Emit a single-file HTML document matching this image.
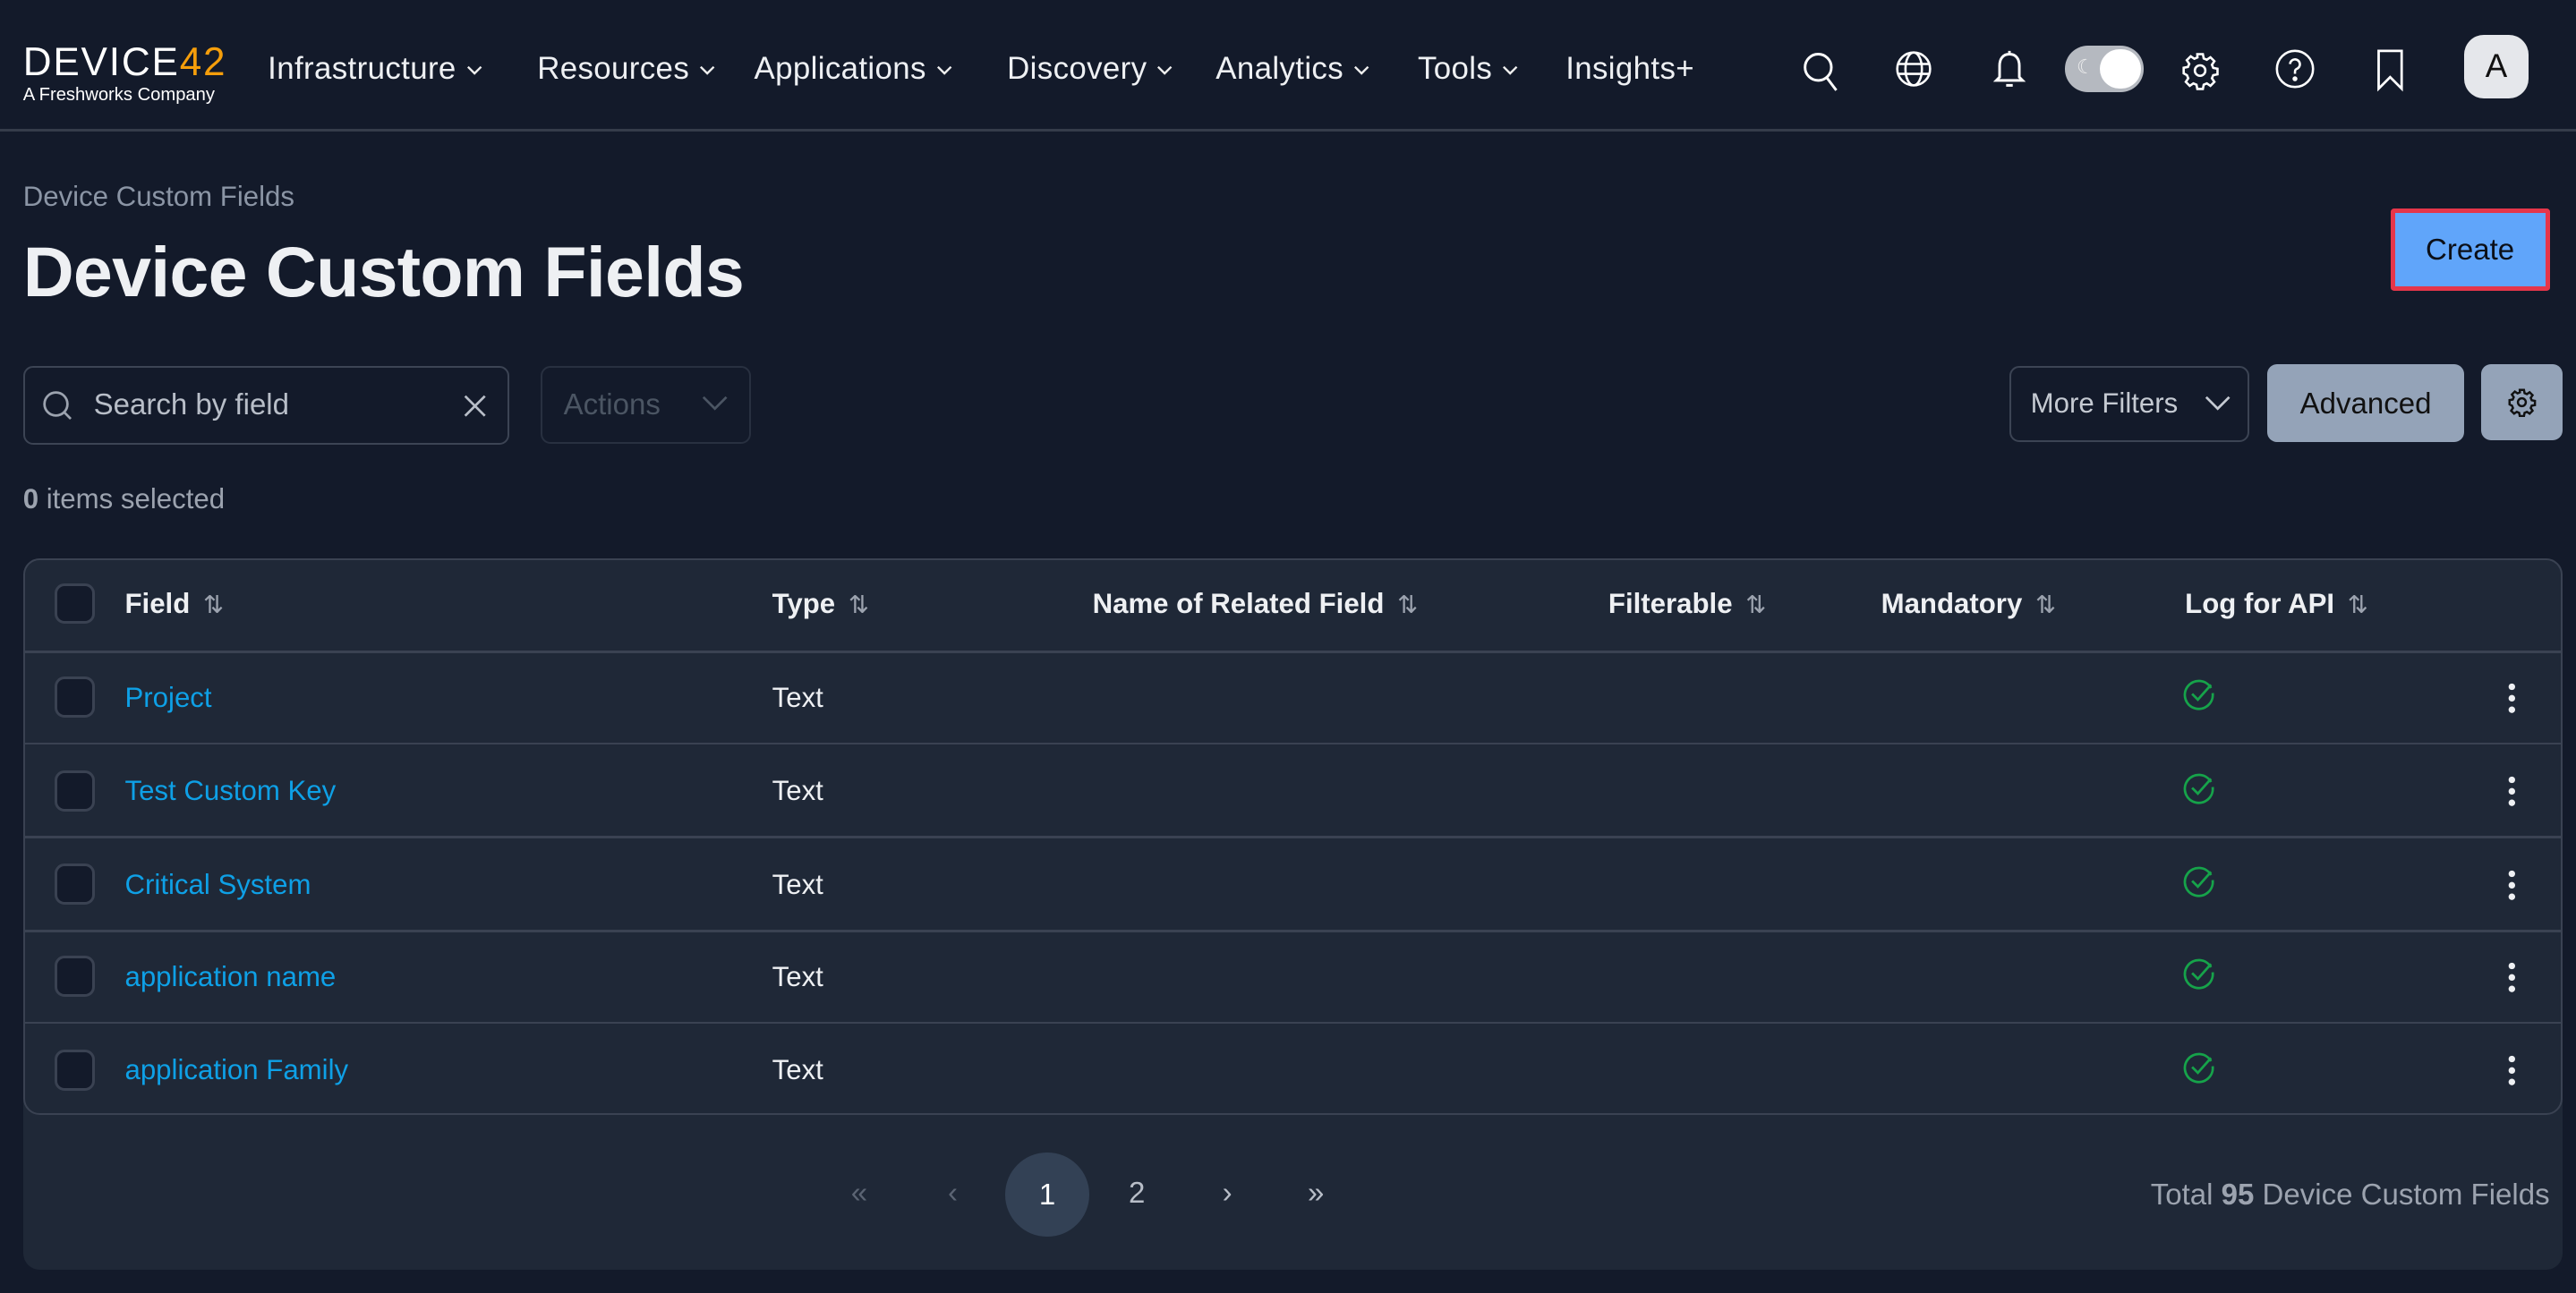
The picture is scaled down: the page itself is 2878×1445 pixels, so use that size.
<!DOCTYPE html>
<html><head><meta charset="utf-8"><style>
*{box-sizing:border-box;margin:0;padding:0}
html,body{background:#131a2a;overflow:hidden}
body{width:1568px;height:787px;zoom:1.83546;font-family:"Liberation Sans",sans-serif;color:#e5e7eb;position:relative}
.a{position:absolute}
.nav{top:31px;font-size:19px;color:#eef0f3;white-space:nowrap;letter-spacing:0.2px}
.nav svg{margin-left:6px;vertical-align:middle}
.hdr{top:0;left:0;width:1568px;height:80px;border-bottom:2px solid #353c4a}
.ic{top:30px}
.btn{border-radius:6px;font-size:17px;display:flex;align-items:center;justify-content:center}
.panel{left:14px;top:340px;width:1546px;height:433px;background:#1f2837;border-radius:10px}
.tbl{left:14px;top:340px;width:1546px;height:339px;border:1.5px solid #3a4252;border-radius:10px}
.line{left:15px;width:1544px;height:1.5px;background:#3a4252}
.cb{left:33px;width:25px;height:25px;border:2px solid #3a4252;border-radius:6px;background:#131a2a}
.th{font-size:17px;font-weight:bold;color:#eef0f3}
.th span{color:#9ca3af;font-weight:normal;margin-left:8px;font-size:15px}
.lk{left:76px;font-size:17px;color:#0ea0e6}
.tx{left:470px;font-size:17px;color:#eef0f3}
.pg{top:716px;font-size:18px;color:#9ca3af}
</style></head><body>
<div class="a hdr"></div>
<div class="a" style="left:14px;top:24px;font-size:24px;letter-spacing:1px;color:#fff;font-weight:300;line-height:28px">DEVICE<span style="color:#f59e0b">42</span></div>
<div class="a" style="left:14px;top:52px;font-size:11px;color:#fff">A Freshworks Company</div>
<div class="a nav" style="left:163px">Infrastructure<svg width="10" height="8"><path d="M1 2l4 4 4-4" stroke="#eee" fill="none" stroke-width="1.3"/></svg></div>
<div class="a nav" style="left:327px">Resources<svg width="10" height="8"><path d="M1 2l4 4 4-4" stroke="#eee" fill="none" stroke-width="1.3"/></svg></div>
<div class="a nav" style="left:459px">Applications<svg width="10" height="8"><path d="M1 2l4 4 4-4" stroke="#eee" fill="none" stroke-width="1.3"/></svg></div>
<div class="a nav" style="left:613px">Discovery<svg width="10" height="8"><path d="M1 2l4 4 4-4" stroke="#eee" fill="none" stroke-width="1.3"/></svg></div>
<div class="a nav" style="left:740px">Analytics<svg width="10" height="8"><path d="M1 2l4 4 4-4" stroke="#eee" fill="none" stroke-width="1.3"/></svg></div>
<div class="a nav" style="left:863px">Tools<svg width="10" height="8"><path d="M1 2l4 4 4-4" stroke="#eee" fill="none" stroke-width="1.3"/></svg></div>
<div class="a nav" style="left:953px">Insights+</div>
<svg class="a ic" style="left:1097px" width="24" height="26" fill="none" stroke="#fff" stroke-width="1.6"><circle cx="10" cy="11" r="8"/><path d="M15 17l6 8"/></svg>
<svg class="a ic" style="left:1153px" width="24" height="24" fill="none" stroke="#fff" stroke-width="1.4"><circle cx="12" cy="12" r="10"/><ellipse cx="12" cy="12" rx="5" ry="10"/><path d="M2 9h20M2 15h20"/></svg>
<svg class="a ic" style="left:1211px" width="24" height="26" fill="none" stroke="#fff" stroke-width="1.6"><path d="M12 3c-4 0-6 3-6 7v7l-2 2h16l-2-2v-7c0-4-2-7-6-7zM12 1v2M10 22h4"/></svg>
<div class="a" style="left:1257px;top:28px;width:48px;height:28px;border-radius:14px;background:#b5b9c0"></div>
<div class="a" style="left:1278px;top:30px;width:25px;height:24px;border-radius:12px;background:#fff"></div>
<div class="a" style="left:1264px;top:34px;font-size:12px;color:#eee">☾</div>
<svg class="a ic" style="left:1327px" width="24" height="26" viewBox="0 0 24 24" fill="none" stroke="#fff" stroke-width="1.4"><path d="M10.3 2h3.4l.5 2.6 1.9.8 2.2-1.5 2.4 2.4-1.5 2.2.8 1.9 2.6.5v3.4l-2.6.5-.8 1.9 1.5 2.2-2.4 2.4-2.2-1.5-1.9.8-.5 2.6h-3.4l-.5-2.6-1.9-.8-2.2 1.5-2.4-2.4 1.5-2.2-.8-1.9L2 13.7v-3.4l2.6-.5.8-1.9-1.5-2.2 2.4-2.4 2.2 1.5 1.9-.8z"/><circle cx="12" cy="12" r="3.2"/></svg>
<svg class="a ic" style="left:1385px" width="24" height="26" fill="none" stroke="#fff" stroke-width="1.4"><circle cx="12" cy="12" r="11"/><path d="M9 9a3 3 0 1 1 4 3c-1 .5-1 1-1 3"/><circle cx="12" cy="18" r=".8" fill="#fff"/></svg>
<svg class="a ic" style="left:1445px" width="22" height="26" fill="none" stroke="#fff" stroke-width="1.5"><path d="M3 1h14v23l-7-7-7 7z"/></svg>
<div class="a" style="left:1500px;top:21px;width:39px;height:39px;border-radius:12px;background:#e5e7eb;color:#111;font-size:20px;display:flex;align-items:center;justify-content:center">A</div>

<div class="a" style="left:14px;top:110px;font-size:17px;color:#8b95a5">Device Custom Fields</div>
<div class="a" style="left:14px;top:141px;font-size:43px;font-weight:bold;color:#eef0f3;letter-spacing:-0.4px">Device Custom Fields</div>
<div class="a btn" style="left:1455px;top:127px;width:97px;height:50px;background:#60a5fa;border:3px solid #e5364a;border-radius:2px;color:#0b0f18;font-size:18px">Create</div>

<div class="a" style="left:14px;top:223px;width:296px;height:48px;border:1.5px solid #3c4454;border-radius:6px"></div>
<svg class="a" style="left:25px;top:237px" width="20" height="20" fill="none" stroke="#9ca3af" stroke-width="1.5"><circle cx="9" cy="9" r="7"/><path d="M14 14l4 4"/></svg>
<div class="a" style="left:57px;top:236px;font-size:18px;color:#b8bec8">Search by field</div>
<svg class="a" style="left:281px;top:239px" width="16" height="16" stroke="#b8bec8" stroke-width="1.5"><path d="M2 2l12 12M14 2L2 14"/></svg>
<div class="a" style="left:329px;top:223px;width:128px;height:47px;border:1.5px solid #283040;border-radius:6px"></div>
<div class="a" style="left:343px;top:236px;font-size:18px;color:#4b5563">Actions</div>
<svg class="a" style="left:427px;top:241px" width="16" height="10" fill="none" stroke="#4b5563" stroke-width="1.5"><path d="M1 1l7 7 7-7"/></svg>

<div class="a" style="left:1223px;top:223px;width:146px;height:46px;border:1.5px solid #3c4454;border-radius:6px"></div>
<div class="a" style="left:1236px;top:236px;font-size:17px;color:#c5cad2">More Filters</div>
<svg class="a" style="left:1342px;top:241px" width="16" height="10" fill="none" stroke="#c5cad2" stroke-width="1.5"><path d="M1 1l7 7 7-7"/></svg>
<div class="a btn" style="left:1380px;top:222px;width:120px;height:47px;background:#94a3b8;color:#111;font-size:18px">Advanced</div>
<div class="a btn" style="left:1510px;top:222px;width:50px;height:46px;background:#94a3b8"><svg width="18" height="18" viewBox="0 0 24 24" fill="none" stroke="#111" stroke-width="1.8"><path d="M10.3 2h3.4l.5 2.6 1.9.8 2.2-1.5 2.4 2.4-1.5 2.2.8 1.9 2.6.5v3.4l-2.6.5-.8 1.9 1.5 2.2-2.4 2.4-2.2-1.5-1.9.8-.5 2.6h-3.4l-.5-2.6-1.9-.8-2.2 1.5-2.4-2.4 1.5-2.2-.8-1.9L2 13.7v-3.4l2.6-.5.8-1.9-1.5-2.2 2.4-2.4 2.2 1.5 1.9-.8z"/><circle cx="12" cy="12" r="3.2"/></svg></div>

<div class="a" style="left:14px;top:294px;font-size:17px;color:#9ca3af"><b>0</b> items selected</div>

<div class="a panel"></div>
<div class="a tbl"></div>
<div class="a line" style="top:396px"></div>
<div class="a line" style="top:452px"></div>
<div class="a line" style="top:509px"></div>
<div class="a line" style="top:566px"></div>
<div class="a line" style="top:622px"></div>

<div class="a cb" style="top:355px"></div>
<div class="a th" style="left:76px;top:358px">Field<span>⇅</span></div>
<div class="a th" style="left:470px;top:358px">Type<span>⇅</span></div>
<div class="a th" style="left:665px;top:358px">Name of Related Field<span>⇅</span></div>
<div class="a th" style="left:979px;top:358px">Filterable<span>⇅</span></div>
<div class="a th" style="left:1145px;top:358px">Mandatory<span>⇅</span></div>
<div class="a th" style="left:1330px;top:358px">Log for API<span>⇅</span></div>

<div class="a cb" style="top:412px"></div><div class="a lk" style="top:415px">Project</div><div class="a tx" style="top:415px">Text</div>
<div class="a cb" style="top:469px"></div><div class="a lk" style="top:472px">Test Custom Key</div><div class="a tx" style="top:472px">Text</div>
<div class="a cb" style="top:526px"></div><div class="a lk" style="top:529px">Critical System</div><div class="a tx" style="top:529px">Text</div>
<div class="a cb" style="top:582px"></div><div class="a lk" style="top:585px">application name</div><div class="a tx" style="top:585px">Text</div>
<div class="a cb" style="top:639px"></div><div class="a lk" style="top:642px">application Family</div><div class="a tx" style="top:642px">Text</div>

<svg class="a" style="left:1329px;top:413px" width="20" height="20" fill="none" stroke="#16a34a" stroke-width="1.5"><path d="M17 6A8.5 8.5 0 1 0 18 9"/><path d="M5.5 9.5l3.5 3.5 8-9"/></svg>
<svg class="a" style="left:1329px;top:470px" width="20" height="20" fill="none" stroke="#16a34a" stroke-width="1.5"><path d="M17 6A8.5 8.5 0 1 0 18 9"/><path d="M5.5 9.5l3.5 3.5 8-9"/></svg>
<svg class="a" style="left:1329px;top:527px" width="20" height="20" fill="none" stroke="#16a34a" stroke-width="1.5"><path d="M17 6A8.5 8.5 0 1 0 18 9"/><path d="M5.5 9.5l3.5 3.5 8-9"/></svg>
<svg class="a" style="left:1329px;top:583px" width="20" height="20" fill="none" stroke="#16a34a" stroke-width="1.5"><path d="M17 6A8.5 8.5 0 1 0 18 9"/><path d="M5.5 9.5l3.5 3.5 8-9"/></svg>
<svg class="a" style="left:1329px;top:640px" width="20" height="20" fill="none" stroke="#16a34a" stroke-width="1.5"><path d="M17 6A8.5 8.5 0 1 0 18 9"/><path d="M5.5 9.5l3.5 3.5 8-9"/></svg>

<svg class="a" style="left:1525px;top:415px" width="8" height="20" fill="#eef0f3"><circle cx="4" cy="3" r="2"/><circle cx="4" cy="10" r="2"/><circle cx="4" cy="17" r="2"/></svg>
<svg class="a" style="left:1525px;top:472px" width="8" height="20" fill="#eef0f3"><circle cx="4" cy="3" r="2"/><circle cx="4" cy="10" r="2"/><circle cx="4" cy="17" r="2"/></svg>
<svg class="a" style="left:1525px;top:529px" width="8" height="20" fill="#eef0f3"><circle cx="4" cy="3" r="2"/><circle cx="4" cy="10" r="2"/><circle cx="4" cy="17" r="2"/></svg>
<svg class="a" style="left:1525px;top:585px" width="8" height="20" fill="#eef0f3"><circle cx="4" cy="3" r="2"/><circle cx="4" cy="10" r="2"/><circle cx="4" cy="17" r="2"/></svg>
<svg class="a" style="left:1525px;top:642px" width="8" height="20" fill="#eef0f3"><circle cx="4" cy="3" r="2"/><circle cx="4" cy="10" r="2"/><circle cx="4" cy="17" r="2"/></svg>

<div class="a pg" style="left:518px;color:#5b6473">«</div>
<div class="a pg" style="left:577px;color:#5b6473">‹</div>
<div class="a" style="left:612px;top:702px;width:51px;height:51px;border-radius:50%;background:#334155;color:#fff;font-size:18px;display:flex;align-items:center;justify-content:center">1</div>
<div class="a pg" style="left:687px;color:#b8bec8">2</div>
<div class="a pg" style="left:744px;color:#b8bec8">›</div>
<div class="a pg" style="left:796px;color:#b8bec8">»</div>
<div class="a" style="right:16px;top:717px;font-size:18px;color:#9ca3af">Total <b>95</b> Device Custom Fields</div>
</body></html>
